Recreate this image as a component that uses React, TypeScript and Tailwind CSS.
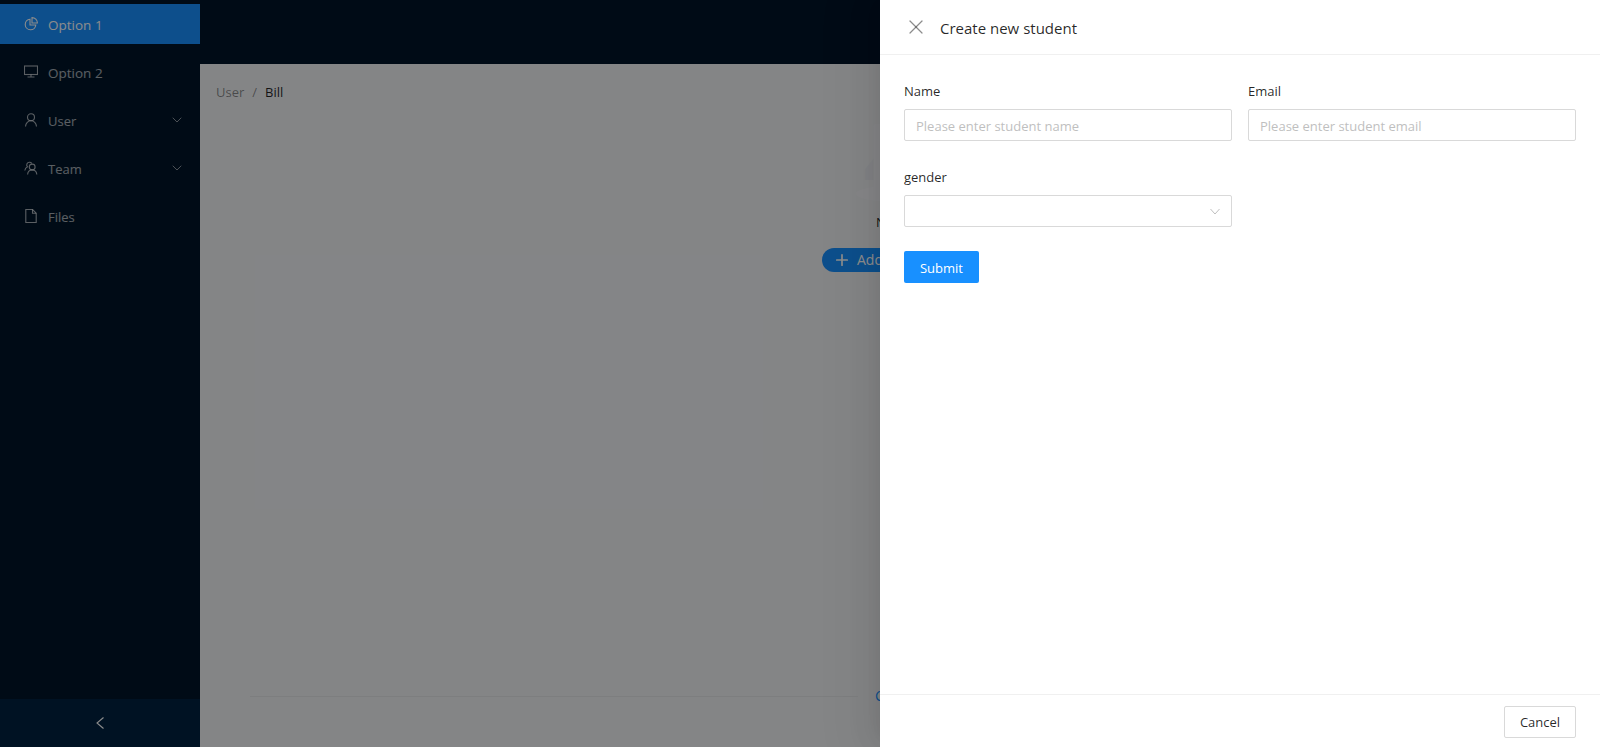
import { ChevronDown, Plus, X } from "lucide-react";

const font = "font-['Open_Sans','Noto_Sans',sans-serif]";

const PieIcon = () => (
  <svg width="14" height="14" viewBox="0 0 14 14" fill="none" stroke="currentColor" strokeWidth="1.1">
    <path d="M6 2.200a5.300 5.300 0 1 0 5.800 5.800H6z" />
    <path d="M8 .6a5.400 5.400 0 0 1 5.400 5.400H8z" />
  </svg>
);

const DesktopIcon = () => (
  <svg width="14" height="14" viewBox="0 0 14 14" fill="none" stroke="currentColor" strokeWidth="1.1">
    <rect x="0.5" y="1" width="13" height="8.500" />
    <path d="M7 9.500v2.500M3.500 12h7" />
  </svg>
);

const UserIcon = () => (
  <svg width="14" height="14" viewBox="0 0 14 14" fill="none" stroke="currentColor" strokeWidth="1.1">
    <circle cx="7" cy="4.300" r="3.500" />
    <path d="M1.500 13.500c.2-3.200 2.600-5.700 5.500-5.700s5.300 2.500 5.500 5.700" />
  </svg>
);

const TeamIcon = () => (
  <svg width="14" height="14" viewBox="0 0 14 14" fill="none" stroke="currentColor" strokeWidth="1.1">
    <circle cx="8.200" cy="6" r="2.900" />
    <path d="M3.600 13.500c.2-2.700 2.200-4.500 4.600-4.500s4.400 1.800 4.600 4.500" />
    <path d="M7.800 2.300A2.900 2.900 0 0 0 3 2.700c-.5 1-.3 2.300.5 3.100C2 6.500 1 7.900.8 9.500" />
  </svg>
);

const FileIcon = () => (
  <svg width="14" height="14" viewBox="0 0 14 14" fill="none" stroke="currentColor" strokeWidth="1.1">
    <path d="M1.800.5h6.700l3.700 3.700v9.300H1.800z" />
    <path d="M8.500.5v3.700h3.700" />
  </svg>
);

const EmptyImage = () => (
  <svg width="121" height="100" viewBox="0 0 184 152" fill="none">
    <ellipse cx="92" cy="138" rx="68" ry="13" fill="#f5f5f7" />
    <path d="M146 101 122 72c-1-1.400-2.800-2.200-4.600-2.200H66c-1.800 0-3.400.8-4.600 2.200L37.500 101v16H146z" fill="#aeb8c2" fillOpacity="0.1" />
    <path d="M55 32h73c2.200 0 4 1.800 4 4v92c0 2.200-1.800 4-4 4H55c-2.200 0-4-1.800-4-4V36c0-2.200 1.800-4 4-4z" fill="#f5f5f7" />
    <path d="M62 42h59v26H62zM62 78h59v5H62zM62 90h59v5H62z" fill="#dce0e6" fillOpacity="0.5" />
  </svg>
);

const menu = [
  { label: "Option 1", icon: <PieIcon />, active: true, size: "text-[13.5px] pt-0.5" },
  { label: "Option 2", icon: <DesktopIcon />, size: "text-[13.5px] pt-0.5" },
  { label: "User", icon: <UserIcon />, sub: true, size: "text-[13px] pt-[3px]" },
  { label: "Team", icon: <TeamIcon />, sub: true, size: "text-[13px] pt-[3px]" },
  { label: "Files", icon: <FileIcon />, size: "text-[13px] pt-[3px]" },
];

const Field = ({ label, placeholder }: { label: string; placeholder: string }) => (
  <div className="flex flex-col">
    <label className="mb-2 h-[22px] text-[13px] leading-6 text-black/85">{label}</label>
    <input
      className="h-8 w-full rounded-[2px] border border-[#d9d9d9] bg-white px-[11px] pt-0.5 text-[13px] text-black/85 outline-none placeholder:text-[#bfbfbf]"
      placeholder={placeholder}
    />
  </div>
);

export default function App() {
  return (
    <div className={`relative flex h-[747px] w-[1600px] overflow-hidden bg-[#f0f2f5] text-[13px] ${font}`}>
      <aside className="flex h-full w-[200px] shrink-0 flex-col bg-[#001529]">
        <ul className="flex flex-1 flex-col gap-2 pt-1">
          {menu.map((item) => (
            <li
              key={item.label}
              className={`flex h-10 items-center pl-6 pr-[15px] ${item.active ? "bg-[#1890ff] text-white" : "text-white/65"}`}
            >
              <span className="mr-2.5 flex w-3.5 items-center">{item.icon}</span>
              <span className={`flex-1 ${item.size}`}>{item.label}</span>
              {item.sub && <ChevronDown size={16} strokeWidth={1.25} className="-mt-px" />}
            </li>
          ))}
        </ul>
        <div className="flex h-12 items-center justify-center bg-[#002140] text-white">
          <svg width="8" height="12" viewBox="0 0 8 12" fill="none" stroke="currentColor" strokeWidth="1.1">
            <path d="M7.500.5 1 6l6.500 5.500" />
          </svg>
        </div>
      </aside>

      <div className="flex min-w-0 flex-1 flex-col">
        <header className="h-16 shrink-0 bg-[#001529]" />
        <main className="mx-4 flex flex-1 flex-col">
          <nav className="mt-4 flex h-[22px] items-center gap-2 pt-0.5 leading-[22px]">
            <span className="text-black/45">User</span>
            <span className="text-black/45">/</span>
            <span className="text-black/85">Bill</span>
          </nav>
          <div className="flex flex-col items-center pt-[1px]">
            <EmptyImage />
            <p className="mt-2 leading-[22px] text-black/85">No data</p>
            <button className="mt-[15px] flex h-6 w-[156px] items-center gap-1.5 rounded-full bg-[#1890ff] pl-[11px] text-sm text-white">
              <Plus size={18} strokeWidth={2.25} />
              Add
            </button>
          </div>
          <div className="mt-auto mb-[41px] ml-[34px] flex items-center">
            <div className="h-px w-[608px] bg-black/5" />
            <span className="ml-[17px] text-sm text-[#1890ff]">Contact</span>
          </div>
        </main>
      </div>

      <div className="absolute inset-0 bg-black/45" />

      <section className="absolute inset-y-0 right-0 flex w-[720px] flex-col bg-white shadow-[-6px_0_16px_-8px_rgba(0,0,0,0.08),-9px_0_28px_0_rgba(0,0,0,0.05),-12px_0_48px_16px_rgba(0,0,0,0.03)]">
        <div className="flex h-[55px] shrink-0 items-center border-b border-[#f0f0f0] px-6">
          <X size={24} strokeWidth={1.2} className="mr-3 text-black/45" />
          <h2 className="pt-0.5 text-[15px] leading-[22px] font-normal text-black/85">Create new student</h2>
        </div>
        <div className="flex-1 p-6">
          <div className="grid grid-cols-2 gap-x-4 gap-y-6">
            <Field label="Name" placeholder="Please enter student name" />
            <Field label="Email" placeholder="Please enter student email" />
            <div className="flex flex-col">
              <label className="mb-2 h-[22px] leading-6 text-black/85">gender</label>
              <div className="flex h-8 items-center justify-end rounded-[2px] border border-[#d9d9d9] bg-white pr-[11px]">
                <svg width="10" height="7" viewBox="0 0 10 7" fill="none" stroke="#bfbfbf" strokeWidth="1">
                  <path d="M.5 1 5 6l4.500-5" />
                </svg>
              </div>
            </div>
          </div>
          <button className="mt-6 flex h-8 w-[75px] items-center justify-center rounded-[2px] bg-[#1890ff] pt-[3px] text-white">
            Submit
          </button>
        </div>
        <div className="flex h-[53px] shrink-0 items-center justify-end border-t border-[#f0f0f0] px-6 pt-[2px]">
          <button className="h-8 w-[72px] rounded-[2px] border border-[#d9d9d9] bg-white pt-0.5 text-black/85">Cancel</button>
        </div>
      </section>
    </div>
  );
}
